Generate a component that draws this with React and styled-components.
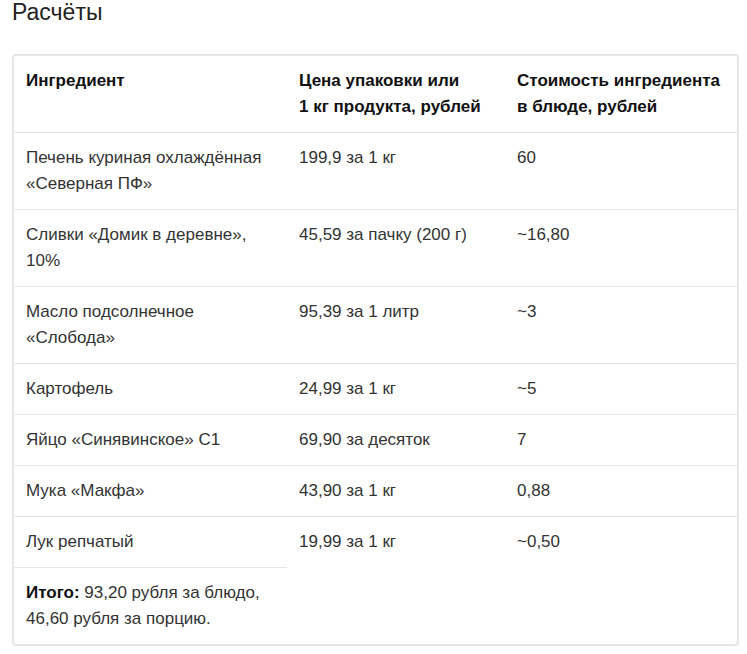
import React from "react";
import styled, { createGlobalStyle } from "styled-components";

const Global = createGlobalStyle`
  html, body { margin: 0; padding: 0; background: #fff; }
  body { font-family: "Liberation Sans", Arial, sans-serif; color: #333; }
`;

const Page = styled.div`
  padding: 0 8px 0 12px;
`;

const Title = styled.h2`
  margin: 0;
  font-size: 23px;
  line-height: 24px;
  font-weight: 400;
  color: #222;
`;

const Card = styled.div`
  margin-top: 30px;
  border: 2px solid #e6e6e6;
  border-radius: 4px;
  width: 723px;
  overflow: hidden;
`;

const Table = styled.table`
  border-collapse: collapse;
  width: 100%;
  table-layout: fixed;
  font-size: 17px;
  line-height: 26px;
`;

const Th = styled.th`
  text-align: left;
  vertical-align: top;
  font-weight: 700;
  color: #111;
  padding: 12px;
  width: ${(p) => (p.$w ? `${p.$w}px` : "auto")};
`;

const Td = styled.td`
  vertical-align: top;
  padding: 12px;
  border-top: 1px solid #e6e6e6;
  color: #333;
`;

const Bold = styled.b`
  color: #111;
`;

const rows = [
  ["Печень куриная охлаждённая «Северная ПФ»", "199,9 за 1 кг", "60"],
  ["Сливки «Домик в деревне», 10%", "45,59 за пачку (200 г)", "~16,80"],
  ["Масло подсолнечное «Слобода»", "95,39 за 1 литр", "~3"],
  ["Картофель", "24,99 за 1 кг", "~5"],
  ["Яйцо «Синявинское» С1", "69,90 за десяток", "7"],
  ["Мука «Макфа»", "43,90 за 1 кг", "0,88"],
  ["Лук репчатый", "19,99 за 1 кг", "~0,50"],
];

export default function App() {
  return (
    <Page>
      <Global />
      <Title>Расчёты</Title>
      <Card>
        <Table>
          <thead>
            <tr>
              <Th $w={249}>Ингредиент</Th>
              <Th $w={194}>
                Цена упаковки или
                <br />1 кг продукта, рублей
              </Th>
              <Th>
                Стоимость ингредиента
                <br />в блюде, рублей
              </Th>
            </tr>
          </thead>
          <tbody>
            {rows.map((r, i) => (
              <tr key={i}>
                <Td>{r[0]}</Td>
                <Td>{r[1]}</Td>
                <Td>{r[2]}</Td>
              </tr>
            ))}
            <tr>
              <Td>
                <Bold>Итого:</Bold> 93,20 рубля за блюдо,
                <br />
                46,60 рубля за порцию.
              </Td>
            </tr>
          </tbody>
        </Table>
      </Card>
    </Page>
  );
}
